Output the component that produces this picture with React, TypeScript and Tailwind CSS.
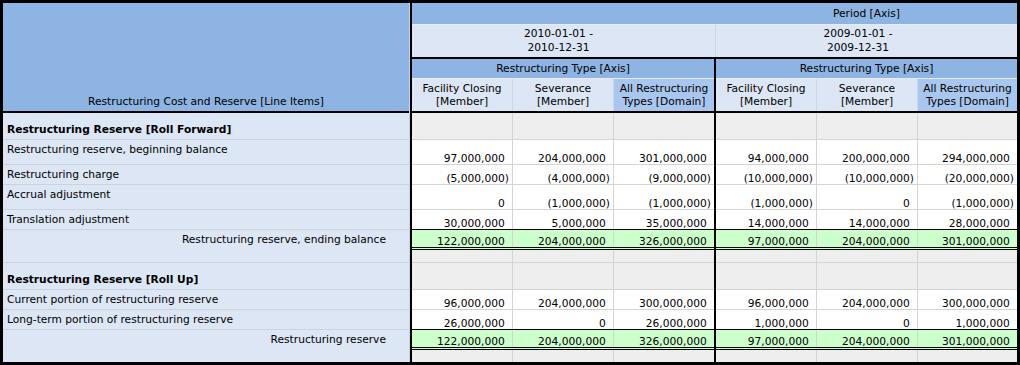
import React from "react";

type Kind = "gray" | "num" | "green";
type Border = "light" | "black" | "double" | "none";

const dataRows: { h: number; kind: Kind; key?: number; b: Border }[] = [
  { h: 26, kind: "gray", b: "light" },
  { h: 24, kind: "num", key: 0, b: "light" },
  { h: 19, kind: "num", key: 1, b: "light" },
  { h: 24, kind: "num", key: 2, b: "light" },
  { h: 19, kind: "num", key: 3, b: "black" },
  { h: 17, kind: "green", key: 4, b: "double" },
  { h: 12, kind: "gray", b: "light" },
  { h: 26, kind: "gray", b: "light" },
  { h: 19, kind: "num", key: 5, b: "light" },
  { h: 19, kind: "num", key: 6, b: "black" },
  { h: 17, kind: "green", key: 7, b: "double" },
  { h: 12, kind: "gray", b: "none" },
];

const values: string[][][] = [
  [
    ["97,000,000", "204,000,000", "301,000,000"],
    ["(5,000,000)", "(4,000,000)", "(9,000,000)"],
    ["0", "(1,000,000)", "(1,000,000)"],
    ["30,000,000", "5,000,000", "35,000,000"],
    ["122,000,000", "204,000,000", "326,000,000"],
    ["96,000,000", "204,000,000", "300,000,000"],
    ["26,000,000", "0", "26,000,000"],
    ["122,000,000", "204,000,000", "326,000,000"],
  ],
  [
    ["94,000,000", "200,000,000", "294,000,000"],
    ["(10,000,000)", "(10,000,000)", "(20,000,000)"],
    ["(1,000,000)", "0", "(1,000,000)"],
    ["14,000,000", "14,000,000", "28,000,000"],
    ["97,000,000", "204,000,000", "301,000,000"],
    ["96,000,000", "204,000,000", "300,000,000"],
    ["1,000,000", "0", "1,000,000"],
    ["97,000,000", "204,000,000", "301,000,000"],
  ],
];

const labels: { h: number; text: string; bold?: boolean; right?: boolean; last?: boolean }[] = [
  { h: 27, text: "Restructuring Reserve [Roll Forward]", bold: true },
  { h: 25, text: "Restructuring reserve, beginning balance" },
  { h: 20, text: "Restructuring charge" },
  { h: 25, text: "Accrual adjustment" },
  { h: 20, text: "Translation adjustment" },
  { h: 33, text: "Restructuring reserve, ending balance", right: true },
  { h: 27, text: "Restructuring Reserve [Roll Up]", bold: true },
  { h: 20, text: "Current portion of restructuring reserve" },
  { h: 20, text: "Long-term portion of restructuring reserve" },
  { h: 32, text: "Restructuring reserve", right: true, last: true },
];

function rowHeight(h: number, b: Border) {
  if (b === "double") return h + 3;
  if (b === "none") return h;
  return h + 1;
}

function borderClass(b: Border) {
  if (b === "light") return "border-b border-[#d4d4d4]";
  if (b === "black") return "border-b border-black";
  if (b === "double") return "border-b-[3px] border-double border-black";
  return "";
}

function Num({ v }: { v: string }) {
  const neg = v.startsWith("(");
  return (
    <span>
      {v}
      {!neg && <span className="invisible">)</span>}
    </span>
  );
}

function Group({ g, last }: { g: number; last?: boolean }) {
  const widths = last ? ["w-[101px]", "w-[101px]", "w-[99px]"] : ["w-[101px]", "w-[101px]", "w-[100px]"];
  return (
    <div className={`flex flex-col ${last ? "w-[301px]" : "w-[304px] border-r-2 border-black"}`}>
      {/* type axis row */}
      <div className="h-[20px] border-b border-[#e6edf7] bg-[#8db4e2] flex items-center justify-center leading-[13px]">
        Restructuring Type [Axis]
      </div>
      <div className="h-[32px] flex">
        {["Facility Closing [Member]", "Severance [Member]", "All Restructuring Types [Domain]"].map((t, i) => (
          <div
            key={i}
            className={`${widths[i]} h-full flex items-center justify-center text-center leading-[13px] ${
              i < 2 ? "border-r border-[#c9d6e8] bg-[#dce6f4]" : "bg-[#a9c6ee]"
            }`}
          >
            <span className={i === 2 ? "px-[2px]" : "px-[8px]"}>{t}</span>
          </div>
        ))}
      </div>
      {/* black line under header */}
      <div className="h-[2px] bg-black" />
      {dataRows.map((r, ri) => {
        const bg = r.kind === "gray" ? "bg-[#eeeeee]" : r.kind === "green" ? "bg-[#ccffcc]" : "bg-white";
        return (
          <div
            key={ri}
            className={`flex ${bg} ${borderClass(r.b)}`}
            style={{ height: rowHeight(r.h, r.b) }}
          >
            {[0, 1, 2].map((c) => (
              <div
                key={c}
                className={`${widths[c]} h-full flex items-end justify-end pr-[3px] leading-[11px] ${
                  c < 2 ? "border-r border-[#d4d4d4]" : ""
                }`}
              >
                {r.key !== undefined && <Num v={values[g][r.key][c]} />}
              </div>
            ))}
          </div>
        );
      })}
    </div>
  );
}

export default function App() {
  return (
    <div
      className="w-[1020px] h-[365px] border-[3px] border-black flex bg-white text-black text-[10.67px]"
      style={{ fontFamily: '"DejaVu Sans", Verdana, sans-serif' }}
    >
      {/* left column */}
      <div className="w-[407px] flex flex-col border-r border-[#c5d4e8]">
        <div className="h-[108px] bg-[#8db4e2] flex items-end justify-center pb-[3px] leading-[13px]">
          Restructuring Cost and Reserve [Line Items]
        </div>
        <div className="h-[2px] bg-black" />
        <div className="flex flex-col bg-[#dce6f4]">
          {labels.map((l, i) => (
            <div
              key={i}
              className={`flex ${l.bold ? "items-end" : "items-start"} ${
                l.right ? "justify-end pr-[23px]" : "justify-start pl-[4px]"
              } ${l.last ? "" : "border-b border-[#cbd2da]"} leading-[19px] ${l.bold ? "font-bold" : ""}`}
              style={{ height: l.h }}
            >
              {l.text}
            </div>
          ))}
        </div>
      </div>
      {/* data area */}
      <div className="flex-1 flex flex-col border-l-2 border-black">
        <div className="h-[22px] flex border-b border-[#e6edf7] bg-[#8db4e2] leading-[13px]">
          <div className="w-[304px]" />
          <div className="flex-1 flex items-center justify-center">Period [Axis]</div>
        </div>
        <div className="h-[34px] flex border-b-2 border-black bg-[#dce6f4] leading-[14px]">
          <div className="w-[304px] border-r border-[#c9d6e8] flex items-center justify-center text-center pr-[10px]">
            2010-01-01 -<br />
            2010-12-31
          </div>
          <div className="flex-1 flex items-center justify-center text-center pr-[17px]">
            2009-01-01 -<br />
            2009-12-31
          </div>
        </div>
        <div className="flex">
          <Group g={0} />
          <Group g={1} last />
        </div>
      </div>
    </div>
  );
}
